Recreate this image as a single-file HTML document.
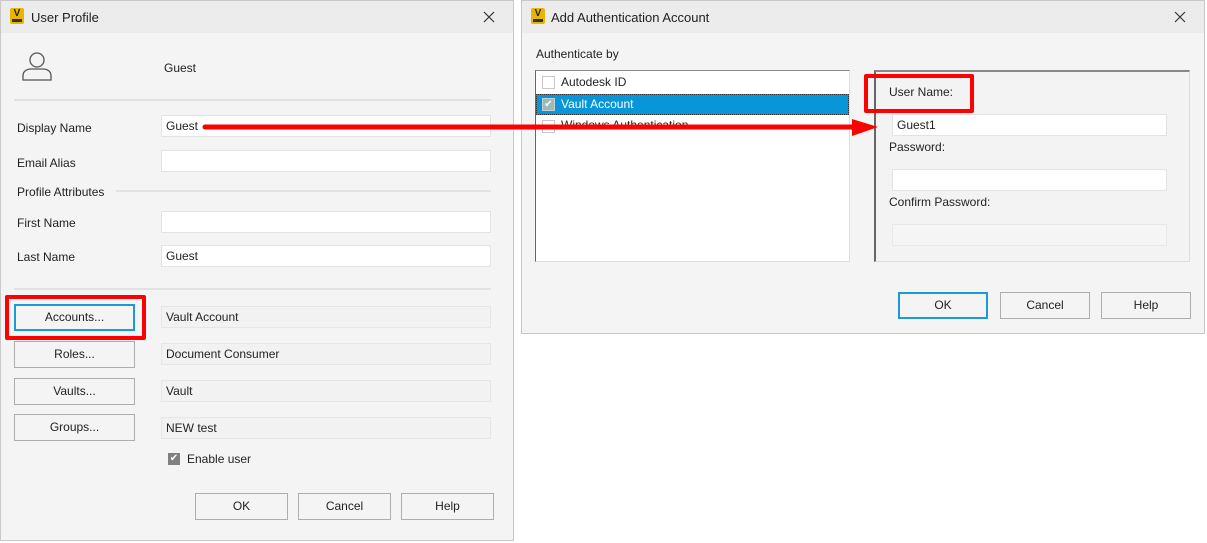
<!DOCTYPE html>
<html><head><meta charset="utf-8"><style>
*{box-sizing:border-box;margin:0;padding:0}
body{width:1207px;height:543px;background:#fff;position:relative;overflow:hidden;font-family:"Liberation Sans",sans-serif;font-size:12px;color:#222}
.a{position:absolute}
.dlg{position:absolute;background:#f4f4f4;box-shadow:inset 0 0 0 1px #c8c8c8}
.tb{position:absolute;left:1px;right:1px;top:1px;height:32px;background:#ececec}
.tt{position:absolute;top:10px;font-size:13px;color:#222}
.ic{position:absolute;top:8px;width:14px;height:16px;background:#e8b500;border-radius:2px;color:#222;font-size:10px;font-weight:bold;text-align:center;line-height:12px}
.ic:after{content:"";position:absolute;left:2px;right:2px;bottom:2px;height:3px;background:#333}
.x{position:absolute;top:11px}
.lbl{position:absolute;font-size:12px}
.inp{position:absolute;background:#fff;border:1px solid #e3e3e3;height:22px;padding:3px 4px;font-size:12px}
.ro{position:absolute;background:#f2f2f2;border:1px solid #e6e6e6;height:22px;padding:3px 4px}
.btn{position:absolute;border:1px solid #adadad;background:#f4f4f4;height:27px;text-align:center;line-height:25px}
.sep{position:absolute;height:2px;background:#e2e2e2}
.red{position:absolute;border:4px solid #f00;border-radius:2px}
.cb{position:absolute;width:13px;height:13px;border:1px solid #c8c8c8;background:#fff}
</style></head><body>

<div class="dlg" style="left:0;top:0;width:514px;height:541px">
 <div class="tb"></div>
 <div class="ic" style="left:10px">V</div>
 <div class="tt" style="left:31px">User Profile</div>
 <svg class="x" style="left:483px" width="12" height="12"><path d="M1 1L11 11M11 1L1 11" stroke="#333" stroke-width="1.2"/></svg>
 <svg class="a" style="left:21px;top:50px" width="32" height="32" viewBox="0 0 32 32"><circle cx="16" cy="10" r="7" fill="none" stroke="#555" stroke-width="1.3"/><path d="M2 30 V26 Q2 20 9 19 H23 Q30 20 30 26 V30 Z" fill="none" stroke="#555" stroke-width="1.3"/></svg>
 <div class="lbl" style="left:164px;top:61px">Guest</div>
 <div class="sep" style="left:14px;top:99px;width:477px"></div>
 <div class="lbl" style="left:17px;top:121px">Display Name</div>
 <div class="inp" style="left:161px;top:115px;width:330px">Guest</div>
 <div class="lbl" style="left:17px;top:156px">Email Alias</div>
 <div class="inp" style="left:161px;top:150px;width:330px"></div>
 <div class="lbl" style="left:17px;top:185px">Profile Attributes</div>
 <div class="sep" style="left:116px;top:190px;width:375px"></div>
 <div class="lbl" style="left:17px;top:216px">First Name</div>
 <div class="inp" style="left:161px;top:211px;width:330px"></div>
 <div class="lbl" style="left:17px;top:250px">Last Name</div>
 <div class="inp" style="left:161px;top:245px;width:330px">Guest</div>
 <div class="sep" style="left:14px;top:288px;width:477px"></div>
 <div class="btn" style="left:14px;top:304px;width:121px;border:2px solid #1a9ad6;line-height:23px">Accounts...</div>
 <div class="red" style="left:5px;top:295px;width:141px;height:45px"></div>
 <div class="ro" style="left:161px;top:306px;width:330px">Vault Account</div>
 <div class="btn" style="left:14px;top:341px;width:121px">Roles...</div>
 <div class="ro" style="left:161px;top:343px;width:330px">Document Consumer</div>
 <div class="btn" style="left:14px;top:378px;width:121px">Vaults...</div>
 <div class="ro" style="left:161px;top:380px;width:330px">Vault</div>
 <div class="btn" style="left:14px;top:414px;width:121px">Groups...</div>
 <div class="ro" style="left:161px;top:417px;width:330px">NEW test</div>
 <div class="a" style="left:168px;top:453px;width:12px;height:12px;background:#808080;color:#fff;font-size:10px;line-height:12px;text-align:center">✔</div>
 <div class="lbl" style="left:187px;top:452px">Enable user</div>
 <div class="btn" style="left:195px;top:493px;width:93px">OK</div>
 <div class="btn" style="left:298px;top:493px;width:93px">Cancel</div>
 <div class="btn" style="left:401px;top:493px;width:93px">Help</div>
</div>

<div class="dlg" style="left:521px;top:0;width:684px;height:334px">
 <div class="tb"></div>
 <div class="ic" style="left:10px">V</div>
 <div class="tt" style="left:30px">Add Authentication Account</div>
 <svg class="x" style="left:653px" width="12" height="12"><path d="M1 1L11 11M11 1L1 11" stroke="#333" stroke-width="1.2"/></svg>
 <div class="lbl" style="left:15px;top:47px">Authenticate by</div>
 <div class="a" style="left:14px;top:70px;width:315px;height:192px;background:#fff;border-left:1px solid #666;border-top:1px solid #888;border-right:1px solid #ddd;border-bottom:1px solid #ddd"></div>
 <div class="cb" style="left:21px;top:76px"></div>
 <div class="lbl" style="left:40px;top:75px">Autodesk ID</div>
 <div class="a" style="left:15px;top:94px;width:313px;height:21px;background:#0896d8;border:1px dotted #333"></div>
 <div class="a" style="left:21px;top:98px;width:13px;height:13px;background:#9bb;border:1px solid #ccc;color:#fff;font-size:10px;line-height:12px;text-align:center">✔</div>
 <div class="lbl" style="left:40px;top:97px;color:#fff">Vault Account</div>
 <div class="cb" style="left:21px;top:120px"></div>
 <div class="lbl" style="left:40px;top:118px">Windows Authentication</div>
 <div class="a" style="left:353px;top:70px;width:316px;height:192px;background:#f3f3f3;border-left:2px solid #666;border-top:2px solid #888;border-right:1px solid #ddd;border-bottom:1px solid #ddd"></div>
 <div class="lbl" style="left:368px;top:85px">User Name:</div>
 <div class="red" style="left:343px;top:74px;width:110px;height:39px"></div>
 <div class="inp" style="left:371px;top:114px;width:275px">Guest1</div>
 <div class="lbl" style="left:368px;top:140px">Password:</div>
 <div class="inp" style="left:371px;top:169px;width:275px"></div>
 <div class="lbl" style="left:368px;top:195px">Confirm Password:</div>
 <div class="inp" style="left:371px;top:224px;width:275px;background:#f5f5f5;border-color:#e8e8e8"></div>
 <div class="btn" style="left:377px;top:292px;width:90px;border:2px solid #1a9ad6;line-height:23px">OK</div>
 <div class="btn" style="left:479px;top:292px;width:90px">Cancel</div>
 <div class="btn" style="left:580px;top:292px;width:90px">Help</div>
</div>

<svg class="a" style="left:0;top:0" width="1207" height="543"><line x1="205" y1="127" x2="858" y2="127" stroke="#f00" stroke-width="5" stroke-linecap="round"/><polygon points="852,119 878,127 852,136" fill="#f00"/></svg>
</body></html>
